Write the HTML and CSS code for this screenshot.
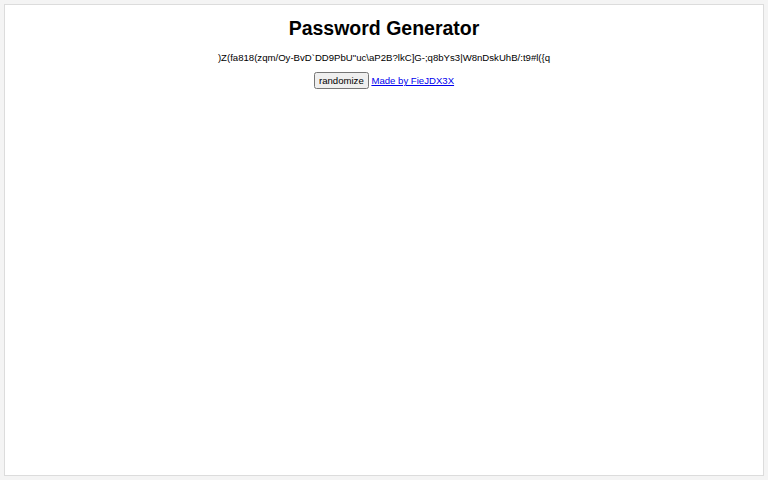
FILE: index.html
```html
<!DOCTYPE html>
<html lang="en">
<head>
    <meta charset="UTF-8">
    <meta name="viewport" content="width=device-width, initial-scale=1.0">
    <title>Password Generator</title>
    <link rel="stylesheet" href="styles.css">
</head>
<body>
    <div class="page">
        <h1 class="title">Password Generator</h1>
        <p class="password" id="password">)Z(fa818(zqm/Oy-BvD`DD9PbU"uc\aP2B?lkC]G-;q8bYs3|W8nDskUhB/:t9#l({q</p>
        <div class="actions">
            <button class="randomize" id="randomize">randomize</button>
            <a href="#" class="credit">Made by FieJDX3X</a>
        </div>
    </div>
</body>
</html>
```

FILE: styles.css
```css
body {
    margin: 0;
    padding: 4px;
    background: #f4f4f4;
    font-family: "Liberation Sans", Arial, sans-serif;
}
.page {
    height: 470px;
    background: white;
    border: 1px solid #dcdcdc;
    text-align: center;
}
.title {
    margin: 0;
    padding-top: 12px;
    font-size: 19.5px;
    font-weight: bold;
    color: black;
}
.password {
    margin: 12px 0 0;
    font-size: 9.6px;
    color: black;
}
.actions {
    margin-top: 9px;
    font-size: 9.6px;
}
.randomize {
    font-family: "Liberation Sans", Arial, sans-serif;
    font-size: 9.6px;
    padding: 1px 3px;
    margin: 0;
}
.credit {
    color: #0000ee;
}
```
